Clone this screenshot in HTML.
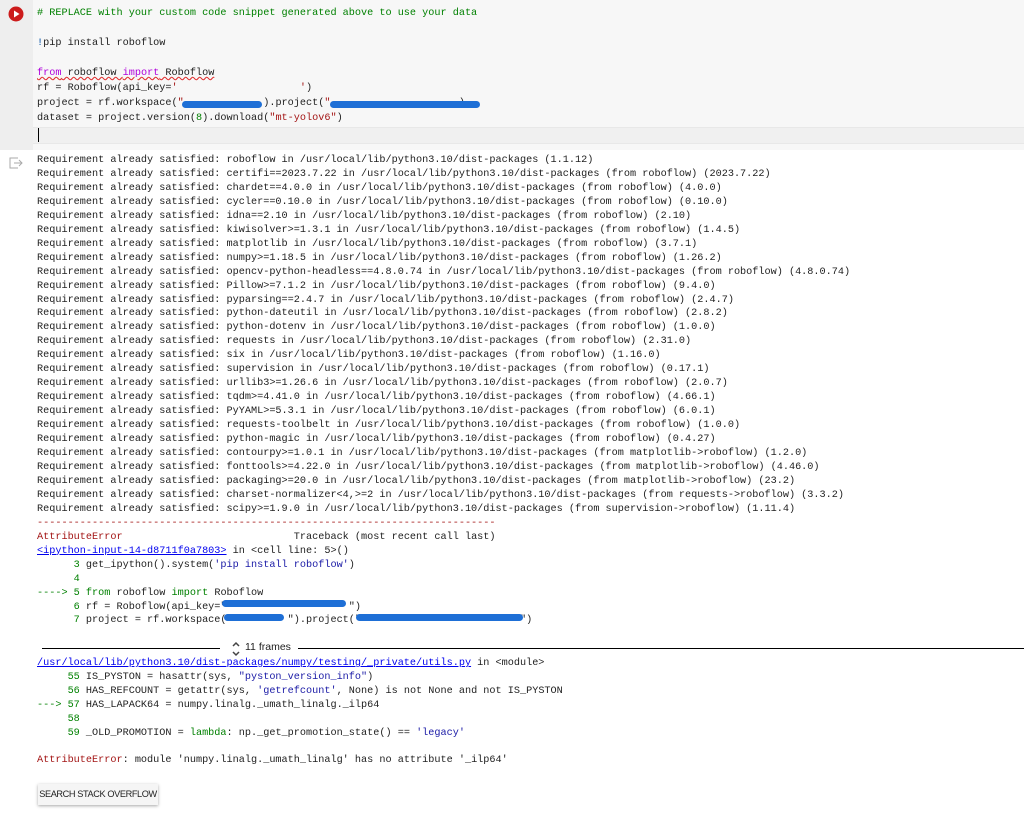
<!DOCTYPE html>
<html><head><meta charset="utf-8"><style>
body{margin:0;width:1024px;height:817px;background:#fff;overflow:hidden;position:relative;font-family:"Liberation Mono",monospace;font-size:10.2px;color:#212121}
.l{position:absolute;left:37px;white-space:pre;line-height:14px}
.g{color:#008000}.p{color:#af00db}.b{color:#0451a5}.s{color:#a31515}.k{color:#0000ff}
.r{color:#a31515}.lk{color:#0000ee;text-decoration:underline}.gr{color:#795e26}.bl{color:#1a1aa6}
.red{position:absolute;background:#1e6fd6;border-radius:4px;height:7px}
</style></head><body>
<div style="position:absolute;left:0;top:0;width:33px;height:150px;background:#eeeeee"></div>
<div style="position:absolute;left:33px;top:0;width:991px;height:150px;background:#f7f7f7"></div>
<div style="position:absolute;left:33px;top:127px;width:991px;height:15px;background:#f0f0f0;border-top:1px solid #e8e8e8;border-bottom:1px solid #e8e8e8"></div>
<svg style="position:absolute;left:8px;top:6px" width="16" height="16"><circle cx="8" cy="8" r="7.5" fill="#cc1b1b"/><path d="M6 4.5L11.5 8 6 11.5z" fill="#fff"/></svg>
<svg style="position:absolute;left:9px;top:157px" width="14" height="12"><path d="M9 1H1v10h8M5 6h8M10 3l3 3-3 3" fill="none" stroke="#aaa" stroke-width="1"/></svg>
<div style="position:absolute;left:38px;top:128px;width:1px;height:14px;background:#000"></div>
<div class="l g" style="top:7px"># REPLACE with your custom code snippet generated above to use your data</div>
<div class="l" style="top:37px"><span class="b">!</span>pip install roboflow</div>
<div class="l" style="top:67px;text-decoration:underline wavy #e03030"><span class="p">from</span> roboflow <span class="p">import</span> Roboflow</div>
<div class="l" style="top:82px">rf = Roboflow(api_key=<span class="s">'                    '</span>)</div>
<div class="l" style="top:97px">project = rf.workspace(<span class="s">"             </span>).project(<span class="s">"                     </span>)</div>
<div class="l" style="top:112px">dataset = project.version(<span class="g">8</span>).download(<span class="s">"mt-yolov6"</span>)</div>
<div class="red" style="left:182px;top:101px;width:80px"></div>
<div class="red" style="left:330px;top:101px;width:150px"></div>
<div class="l" style="top:154px;line-height:13.95px">Requirement already satisfied: roboflow in /usr/local/lib/python3.10/dist-packages (1.1.12)
Requirement already satisfied: certifi==2023.7.22 in /usr/local/lib/python3.10/dist-packages (from roboflow) (2023.7.22)
Requirement already satisfied: chardet==4.0.0 in /usr/local/lib/python3.10/dist-packages (from roboflow) (4.0.0)
Requirement already satisfied: cycler==0.10.0 in /usr/local/lib/python3.10/dist-packages (from roboflow) (0.10.0)
Requirement already satisfied: idna==2.10 in /usr/local/lib/python3.10/dist-packages (from roboflow) (2.10)
Requirement already satisfied: kiwisolver>=1.3.1 in /usr/local/lib/python3.10/dist-packages (from roboflow) (1.4.5)
Requirement already satisfied: matplotlib in /usr/local/lib/python3.10/dist-packages (from roboflow) (3.7.1)
Requirement already satisfied: numpy>=1.18.5 in /usr/local/lib/python3.10/dist-packages (from roboflow) (1.26.2)
Requirement already satisfied: opencv-python-headless==4.8.0.74 in /usr/local/lib/python3.10/dist-packages (from roboflow) (4.8.0.74)
Requirement already satisfied: Pillow>=7.1.2 in /usr/local/lib/python3.10/dist-packages (from roboflow) (9.4.0)
Requirement already satisfied: pyparsing==2.4.7 in /usr/local/lib/python3.10/dist-packages (from roboflow) (2.4.7)
Requirement already satisfied: python-dateutil in /usr/local/lib/python3.10/dist-packages (from roboflow) (2.8.2)
Requirement already satisfied: python-dotenv in /usr/local/lib/python3.10/dist-packages (from roboflow) (1.0.0)
Requirement already satisfied: requests in /usr/local/lib/python3.10/dist-packages (from roboflow) (2.31.0)
Requirement already satisfied: six in /usr/local/lib/python3.10/dist-packages (from roboflow) (1.16.0)
Requirement already satisfied: supervision in /usr/local/lib/python3.10/dist-packages (from roboflow) (0.17.1)
Requirement already satisfied: urllib3>=1.26.6 in /usr/local/lib/python3.10/dist-packages (from roboflow) (2.0.7)
Requirement already satisfied: tqdm>=4.41.0 in /usr/local/lib/python3.10/dist-packages (from roboflow) (4.66.1)
Requirement already satisfied: PyYAML>=5.3.1 in /usr/local/lib/python3.10/dist-packages (from roboflow) (6.0.1)
Requirement already satisfied: requests-toolbelt in /usr/local/lib/python3.10/dist-packages (from roboflow) (1.0.0)
Requirement already satisfied: python-magic in /usr/local/lib/python3.10/dist-packages (from roboflow) (0.4.27)
Requirement already satisfied: contourpy>=1.0.1 in /usr/local/lib/python3.10/dist-packages (from matplotlib->roboflow) (1.2.0)
Requirement already satisfied: fonttools>=4.22.0 in /usr/local/lib/python3.10/dist-packages (from matplotlib->roboflow) (4.46.0)
Requirement already satisfied: packaging>=20.0 in /usr/local/lib/python3.10/dist-packages (from matplotlib->roboflow) (23.2)
Requirement already satisfied: charset-normalizer&lt;4,>=2 in /usr/local/lib/python3.10/dist-packages (from requests->roboflow) (3.3.2)
Requirement already satisfied: scipy>=1.9.0 in /usr/local/lib/python3.10/dist-packages (from supervision->roboflow) (1.11.4)
<span class="r">---------------------------------------------------------------------------</span>
<span class="r">AttributeError</span>                            Traceback (most recent call last)
<span class="lk">&lt;ipython-input-14-d8711f0a7803></span> in &lt;cell line: 5>()
<span class="g">      3</span> get_ipython().system(<span class="bl">'pip install roboflow'</span>)
<span class="g">      4</span>
<span class="g">----> 5</span> <span class="g">from</span> roboflow <span class="g">import</span> Roboflow
<span class="g">      6</span> rf = Roboflow(api_key="                    ")
<span class="g">      7</span> project = rf.workspace("         ").project("                          ")</div>
<div class="red" style="left:222px;top:600px;width:124px"></div>
<div class="red" style="left:224px;top:614px;width:60px"></div>
<div class="red" style="left:356px;top:614px;width:167px"></div>
<div style="position:absolute;left:42px;top:648px;width:178px;height:1px;background:#000"></div>
<div style="position:absolute;left:298px;top:648px;width:726px;height:1px;background:#000"></div>
<svg style="position:absolute;left:231px;top:641px" width="10" height="16"><path d="M2 5l3-3 3 3M2 11l3 3 3-3" fill="none" stroke="#444" stroke-width="1.5"/></svg>
<div style="position:absolute;left:245px;top:641px;font-family:'Liberation Sans',sans-serif;font-size:10.5px;color:#212121">11 frames</div>
<div class="l" style="top:657px;line-height:13.9px"><span class="lk">/usr/local/lib/python3.10/dist-packages/numpy/testing/_private/utils.py</span> in &lt;module>
<span class="g">     55</span> IS_PYSTON = hasattr(sys, <span class="bl">"pyston_version_info"</span>)
<span class="g">     56</span> HAS_REFCOUNT = getattr(sys, <span class="bl">'getrefcount'</span>, None) is not None and not IS_PYSTON
<span class="g">---> 57</span> HAS_LAPACK64 = numpy.linalg._umath_linalg._ilp64
<span class="g">     58</span>
<span class="g">     59</span> _OLD_PROMOTION = <span class="g">lambda</span>: np._get_promotion_state() == <span class="bl">'legacy'</span>

<span class="r">AttributeError</span>: module 'numpy.linalg._umath_linalg' has no attribute '_ilp64'</div>
<div style="position:absolute;left:38px;top:784px;width:120px;height:21px;background:#f5f5f5;box-shadow:0 1px 3px rgba(0,0,0,.35);font-family:'Liberation Sans',sans-serif;font-size:9.2px;line-height:21px;text-align:center;color:#212121;letter-spacing:-0.4px">SEARCH STACK OVERFLOW</div>
</body></html>
